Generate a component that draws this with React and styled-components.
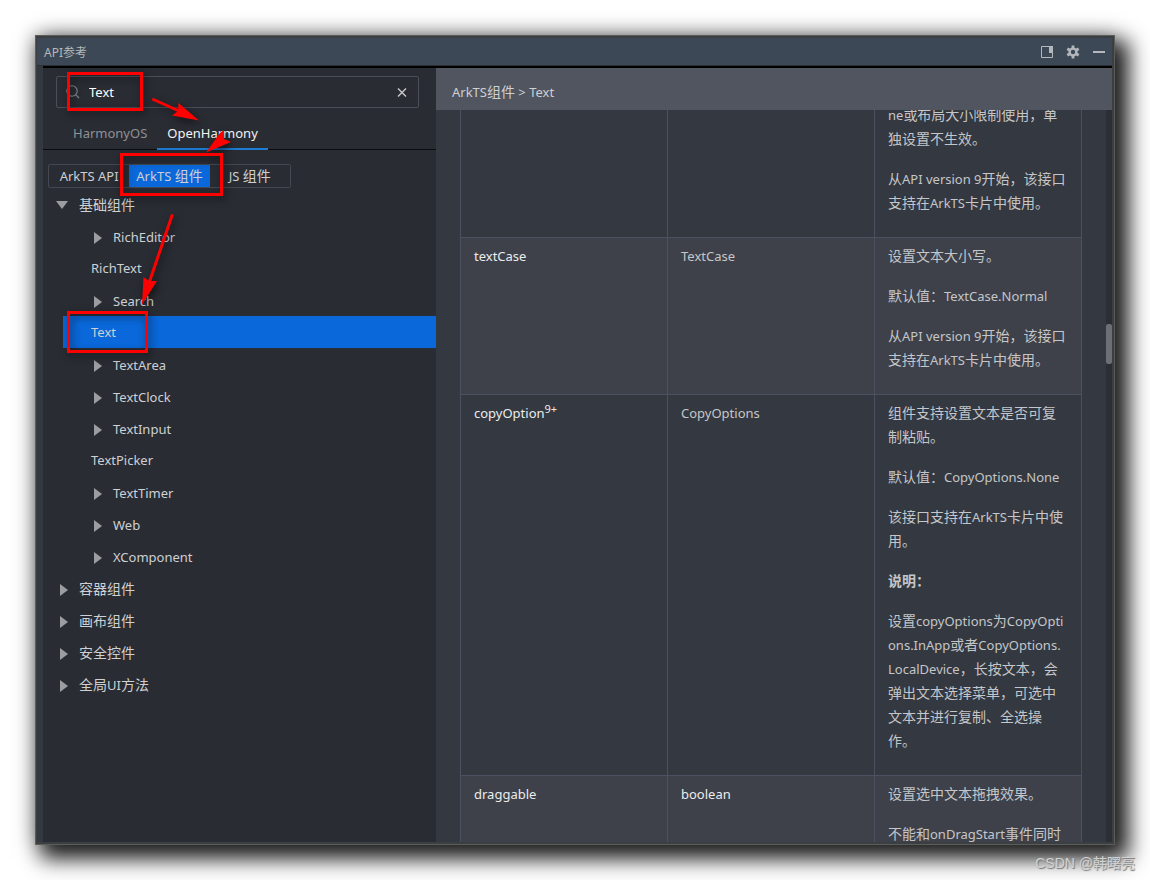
import React from 'react';
import styled, { createGlobalStyle, css } from 'styled-components';

const GlobalStyle = createGlobalStyle`
  * { box-sizing: border-box; }
  body {
    margin: 0;
    background: #fff;
    color: #ced0d3;
    font: 13px/24px "Noto Sans", "Noto Sans CJK SC", sans-serif;
  }
  button, input { font: inherit; color: inherit; }
`;

const Page = styled.div`
  position: relative;
  height: 100vh;
  min-height: 480px;
  padding: 35px;
  overflow: hidden;
`;

const Window = styled.main`
  display: flex;
  flex-direction: column;
  height: 100%;
  border: 1px solid #5b5d5a;
  background: #3c3f41;
  padding: 2px 2px 2px 1px;
  box-shadow: 10px 10px 20px 4px rgba(0, 0, 0, 0.85), 0 0 20px rgba(0, 0, 0, 0.35);
`;

const TitleBar = styled.header`
  display: flex;
  flex: none;
  align-items: center;
  justify-content: space-between;
  height: 28px;
  padding: 0 6px 0 7px;
  border-bottom: 1px solid #2c2f34;
  background: #3c4855;
`;

const Title = styled.h1`
  margin: 0;
  padding-top: 2px;
  font-size: 12px;
  font-weight: 400;
  color: #b4b8bc;
`;

const WindowActions = styled.div`
  display: flex;
  gap: 12px;
`;

const IconButton = styled.button`
  display: flex;
  padding: 0;
  border: 0;
  background: none;
  color: #b4b8bc;
`;

const Body = styled.div`
  display: flex;
  flex: 1;
  min-height: 0;
  padding-left: 6px;
  background: #343840;
`;

const Sidebar = styled.aside`
  flex: 0 0 393px;
  border-top: 2px solid #000;
  background: #292c33;
  overflow: hidden;
`;

const SearchBox = styled.label`
  display: flex;
  align-items: center;
  height: 32px;
  margin: 8px 17px 0 13px;
  padding: 0 10px 0 9px;
  border: 1px solid #4a4e57;
  border-radius: 2px;
`;

const SearchInput = styled.input`
  flex: 1;
  min-width: 0;
  height: 24px;
  margin-left: 9px;
  padding: 0;
  border: 0;
  outline: 0;
  background: none;
  color: #fff;
`;

const Tabs = styled.nav`
  display: flex;
  height: 42px;
  padding: 8px 20px 0;
  border-bottom: 1px solid #0b0c0e;
`;

const Tab = styled.button`
  height: 34px;
  padding: 2px 10px 0;
  border: 0;
  border-bottom: 2px solid ${(p) => (p.$active ? '#1c7cd6' : 'transparent')};
  background: none;
  color: ${(p) => (p.$active ? '#f2f3f5' : '#8f9196')};
`;

const Segments = styled.div`
  display: flex;
  width: 243px;
  height: 24px;
  margin: 14px 0 1px 5px;
  border: 1px solid #444851;
  border-radius: 2px;
`;

const Segment = styled.button`
  flex: 1;
  padding: 0;
  border: 0;
  line-height: 22px;
  background: ${(p) => (p.$active ? '#0a68da' : 'none')};
  white-space: nowrap;
`;

const List = styled.ul`
  margin: 0;
  padding: 0;
  list-style: none;
`;

const ChildList = styled(List)`
  margin-left: 20px;
`;

const Row = styled.button`
  display: flex;
  align-items: center;
  gap: 10px;
  width: 100%;
  height: 32px;
  margin: ${(p) => (p.$leaf ? '-1px 0 1px' : '0')};
  padding: 0 0 0 ${(p) => p.$indent}px;
  border: 0;
  background: ${(p) => (p.$selected ? '#0a68da' : 'none')};
  text-align: left;
`;

const Caret = styled.svg`
  flex: none;
  margin-top: 2px;
  fill: #9b9da1;
`;

const Reader = styled.section`
  display: flex;
  flex: 1;
  flex-direction: column;
  min-width: 0;
  border-top: 2px solid #000;
`;

const Breadcrumb = styled.nav`
  flex: none;
  height: 42px;
  padding: 12px 16px 6px;
  background: #505560;
`;

const Scroll = styled.div`
  display: flex;
  flex: 1;
  min-height: 0;
  overflow: hidden;
`;

const Doc = styled.article`
  flex: 1;
  min-width: 0;
  padding: 0 24px;
`;

const Track = styled.div`
  width: 6px;
  padding-top: 214px;
  background: #2b2e35;
`;

const Thumb = styled.div`
  height: 40px;
  border-radius: 2px;
  background: #6c6f75;
`;

const Table = styled.table`
  width: 100%;
  margin-top: -14px;
  border-collapse: collapse;
  table-layout: fixed;

  tr:nth-child(even) { background: #3e4149; }
`;

const cell = css`
  padding: 6px 13px;
  border: 1px solid #4c5060;
  text-align: left;
  vertical-align: top;
  font-weight: 400;
`;

const NameCell = styled.th`
  ${cell}
  color: #ebecee;

  sup {
    font-size: 11px;
    line-height: 0;
  }
`;

const Cell = styled.td`
  ${cell}
  color: ${(p) => (p.$strong ? '#ebecee' : '#c4c6c9')};
  word-break: break-all;
`;

const Para = styled.p`
  margin: 0 0 16px;
  font-weight: ${(p) => (p.$bold ? 700 : 400)};
  white-space: pre-line;
`;

const HanText = styled.span`
  font-family: "Noto Sans CJK SC", sans-serif;
  font-size: 14px;
  line-height: 20px;
`;

const Marks = styled.svg`
  position: absolute;
  top: 0;
  left: 0;
  pointer-events: none;
  filter: drop-shadow(2px 3px 4px rgba(0, 0, 0, 0.6));
`;

const Watermark = styled.footer`
  position: absolute;
  right: 15px;
  bottom: 5px;
  font: 14px/24px "Liberation Sans", "Noto Sans CJK SC", sans-serif;
  color: #d2d2d2;
  text-shadow: 1px 1px 1px #777;
`;

// Chinese runs are set one pixel larger than the Latin text beside them.
function Mixed({ text }) {
  return text
    .split(/([\u3000-\u9fff\uff00-\uffef]+)/)
    .filter(Boolean)
    .map((part, i) =>
      /[\u3000-\u9fff\uff00-\uffef]/.test(part) ? <HanText key={i}>{part}</HanText> : part
    );
}

const children = [
  ['RichEditor', true],
  ['RichText', false],
  ['Search', true],
  ['Text', false],
  ['TextArea', true],
  ['TextClock', true],
  ['TextInput', true],
  ['TextPicker', false],
  ['TextTimer', true],
  ['Web', true],
  ['XComponent', true],
];

const groups = ['容器组件', '画布组件', '安全控件', '全局UI方法'];

const rows = [
  { name: '', type: '', paras: ['ne或布局大小限制使用，单独设置不生效。', '从API version 9开始，该接口\n支持在ArkTS卡片中使用。'] },
  { name: 'textCase', type: 'TextCase', paras: ['设置文本大小写。', '默认值：TextCase.Normal', '从API version 9开始，该接口\n支持在ArkTS卡片中使用。'] },
  {
    name: 'copyOption',
    sup: '9+',
    type: 'CopyOptions',
    paras: [
      '组件支持设置文本是否可复制粘贴。',
      '默认值：CopyOptions.None',
      '该接口支持在ArkTS卡片中使用。',
      '说明：',
      '设置copyOptions为CopyOpti\nons.InApp或者CopyOptions.\nLocalDevice，长按文本，会\n弹出文本选择菜单，可选中\n文本并进行复制、全选操\n作。',
    ],
  },
  { name: 'draggable', type: 'boolean', strong: true, paras: ['设置选中文本拖拽效果。', '不能和onDragStart事件同时\n使用。'] },
];

const RightCaret = () => (
  <Caret width="10" height="12" viewBox="0 0 10 12"><path d="M1 0L9 6L1 12Z" /></Caret>
);

export default function App() {
  return (
    <Page>
      <GlobalStyle />
      <Window>
        <TitleBar>
          <Title>API参考</Title>
          <WindowActions>
            <IconButton aria-label="Dock">
              <svg width="14" height="14" viewBox="0 0 14 14">
                <path d="M1.5 1.5H12.5V12.5H1.5Z" fill="none" stroke="currentColor" />
                <path d="M9 1H13V8H9Z" fill="currentColor" />
              </svg>
            </IconButton>
            <IconButton aria-label="Settings">
              <svg width="14" height="14" viewBox="0 0 14 14">
                <circle cx="7" cy="7" r="3.4" fill="none" stroke="currentColor" strokeWidth="2.4" />
                <path
                  d="M7 0.4V3M7 11V13.6M1.3 3.7L3.6 5M10.4 9L12.7 10.3M1.3 10.3L3.6 9M10.4 5L12.7 3.7"
                  stroke="currentColor"
                  strokeWidth="2.8"
                />
              </svg>
            </IconButton>
            <IconButton aria-label="Minimize">
              <svg width="14" height="14" viewBox="0 0 14 14">
                <path d="M1 6H13V8H1Z" fill="currentColor" />
              </svg>
            </IconButton>
          </WindowActions>
        </TitleBar>
        <Body>
          <Sidebar>
            <SearchBox>
              <svg width="14" height="14" viewBox="0 0 14 14" fill="none" stroke="#85888e" strokeWidth="1.1">
                <circle cx="6" cy="6" r="5.2" />
                <path d="M9.700 9.700L13 13" />
              </svg>
              <SearchInput aria-label="Search" defaultValue="Text" />
              <IconButton aria-label="Clear">
                <svg width="12" height="12" viewBox="0 0 12 12" stroke="#c8cacd" strokeWidth="1.4">
                  <path d="M2 2.500L10 10.500M10 2.500L2 10.500" />
                </svg>
              </IconButton>
            </SearchBox>
            <Tabs>
              <Tab>HarmonyOS</Tab>
              <Tab $active>OpenHarmony</Tab>
            </Tabs>
            <Segments>
              <Segment>ArkTS API</Segment>
              <Segment $active><Mixed text="ArkTS 组件" /></Segment>
              <Segment><Mixed text="JS 组件" /></Segment>
            </Segments>
            <List>
              <li>
                <Row $indent={13}>
                  <Caret width="13" height="12" viewBox="0 0 13 12"><path d="M0 1H12L6 9Z" /></Caret>
                  <span><Mixed text="基础组件" /></span>
                </Row>
                <ChildList>
                  {children.map(([label, branch]) => (
                    <li key={label}>
                      <Row $indent={branch ? 30 : 28} $leaf={!branch} $selected={label === 'Text'}>
                        {branch && <RightCaret />}
                        <span>{label}</span>
                      </Row>
                    </li>
                  ))}
                </ChildList>
              </li>
              {groups.map((label) => (
                <li key={label}>
                  <Row $indent={16}>
                    <RightCaret />
                    <span><Mixed text={label} /></span>
                  </Row>
                </li>
              ))}
            </List>
          </Sidebar>
          <Reader>
            <Breadcrumb><Mixed text="ArkTS组件 > Text" /></Breadcrumb>
            <Scroll>
              <Doc>
                <Table>
                  <tbody>
                    {rows.map((row) => (
                      <tr key={row.name}>
                        <NameCell scope="row">{row.name}{row.sup && <sup>{row.sup}</sup>}</NameCell>
                        <Cell $strong={row.strong}>{row.type}</Cell>
                        <Cell>
                          {row.paras.map((text) => (
                            <Para key={text} $bold={text === '说明：'}><Mixed text={text} /></Para>
                          ))}
                        </Cell>
                      </tr>
                    ))}
                  </tbody>
                </Table>
              </Doc>
              <Track><Thumb /></Track>
            </Scroll>
          </Reader>
        </Body>
      </Window>
      <Marks width="300" height="400" viewBox="0 0 300 400">
        <g fill="none" stroke="#f00" strokeWidth="3" strokeLinecap="round">
          <rect x="68.5" y="73.5" width="73" height="36" />
          <rect x="121.5" y="154.5" width="100" height="40" />
          <rect x="68.5" y="312.5" width="78" height="39" />
          <path d="M153.500 99.500L179 111M172 215.500L149 283" />
        </g>
        <g fill="#f00">
          <path d="M178.500 103L199 120.500L172 115.500L178 111Z" />
          <path d="M206 152.500L220 133L224 130L224 139L231 142Z" />
          <path d="M142 304.500L143.500 277L149 281L157 281Z" />
        </g>
      </Marks>
      <Watermark>CSDN @韩曙亮</Watermark>
    </Page>
  );
}
